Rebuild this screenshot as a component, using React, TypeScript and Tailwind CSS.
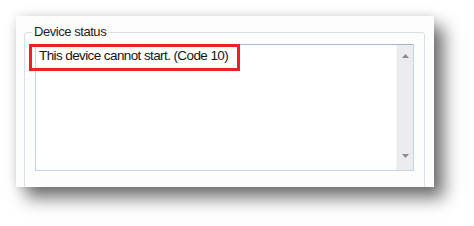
import React from 'react';

const font = { fontFamily: '"Liberation Sans", Arial, sans-serif' };

const ScrollArrow: React.FC<{ up?: boolean }> = ({ up }) => (
  <svg width="7" height="4" viewBox="0 0 7 4" className="block">
    <path d={up ? 'M0 4L3.5 0L7 4Z' : 'M0 0L7 0L3.5 4Z'} fill="#8a8a8a" />
  </svg>
);

const App: React.FC = () => {
  return (
    <div className="w-[474px] h-[226px] bg-white pt-[16px] pl-[16px] overflow-hidden" style={font}>
      <div className="w-[418px] h-[171px] bg-[#fdfdfd] overflow-hidden pl-[8px] pr-[9px] pt-[8px] shadow-[10px_11px_16px_rgba(0,0,0,0.55),0_0_10px_rgba(0,0,0,0.12)]">
        <fieldset className="h-[200px] border border-[#d8dfe4] rounded-[3px] px-[10px] pt-[4px]">
          <legend className="ml-[-3px] px-[2px] text-[13px] leading-[16px] tracking-[-0.45px] text-[#1e1e1e]">
            Device status
          </legend>
          <div className="relative flex h-[127px] bg-white border border-[#c6d6e6] border-t-[#9fb9d5]">
            <div className="flex-1 pl-[3px] pt-[3px] text-[13.5px] leading-[16px] tracking-[-0.6px] text-[#141414]">
              This device cannot start. (Code 10)
            </div>
            <div className="w-[17px] bg-[#ececee] border-l border-[#f4f4f4] flex flex-col items-center justify-between pt-[9px] pb-[12px]">
              <ScrollArrow up />
              <ScrollArrow />
            </div>
            <div className="absolute left-[-7px] top-[-1px] w-[211px] h-[27px] border-[3px] border-[#e8212a]" />
          </div>
        </fieldset>
      </div>
    </div>
  );
};

export default App;
